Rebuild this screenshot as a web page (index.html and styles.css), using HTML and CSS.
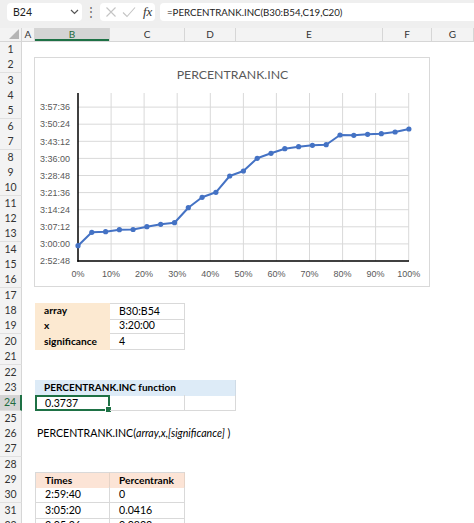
FILE: index.html
```html
<!DOCTYPE html>
<html>
<head>
<meta charset="utf-8">
<link rel="stylesheet" href="styles.css">
</head>
<body>
<div class="fbar">
  <div class="namebox"><span>B24</span>
    <svg class="chev" width="9" height="6" viewBox="0 0 9 6"><path d="M1 1 L4.5 4.5 L8 1" fill="none" stroke="#555" stroke-width="1.2"/></svg>
  </div>
  <div class="dots">⋮</div>
  <div class="fxbox">
    <svg width="12" height="12" viewBox="0 0 12 12"><path d="M1.5 1.5 L10.5 10.5 M10.5 1.5 L1.5 10.5" stroke="#c4c4c4" stroke-width="1.1" fill="none"/></svg>
    <svg width="14" height="12" viewBox="0 0 14 12"><path d="M1 6.5 L5 10.5 L13 1.5" stroke="#c4c4c4" stroke-width="1.1" fill="none"/></svg>
    <span class="fx">fx</span>
  </div>
  <div class="formula">=PERCENTRANK.INC(B30:B54,C19,C20)</div>
</div>

<div class="sheet">
  <div class="hrow">
    <div class="corner"><svg width="10" height="10" viewBox="0 0 10 10"><path d="M10 0 L10 10 L0 10 Z" fill="#b5b5b5"/></svg></div>
    <div class="ch">A</div><div class="ch sel">B</div><div class="ch">C</div><div class="ch">D</div><div class="ch">E</div><div class="ch">F</div><div class="ch">G</div>
  </div>
  <div class="row"><div class="rh">1</div></div>
  <div class="row"><div class="rh">2</div></div>
  <div class="row"><div class="rh">3</div></div>
  <div class="row"><div class="rh">4</div></div>
  <div class="row"><div class="rh">5</div></div>
  <div class="row"><div class="rh">6</div></div>
  <div class="row"><div class="rh">7</div></div>
  <div class="row"><div class="rh">8</div></div>
  <div class="row"><div class="rh">9</div></div>
  <div class="row"><div class="rh">10</div></div>
  <div class="row"><div class="rh">11</div></div>
  <div class="row"><div class="rh">12</div></div>
  <div class="row"><div class="rh">13</div></div>
  <div class="row"><div class="rh">14</div></div>
  <div class="row"><div class="rh">15</div></div>
  <div class="row"><div class="rh">16</div></div>
  <div class="row"><div class="rh">17</div></div>
  <div class="row"><div class="rh">18</div><div class="c cb lbl">array</div><div class="c cc bx bt">B30:B54</div></div>
  <div class="row"><div class="rh">19</div><div class="c cb lbl">x</div><div class="c cc bx">3:20:00</div></div>
  <div class="row"><div class="rh">20</div><div class="c cb lbl">significance</div><div class="c cc bx">4</div></div>
  <div class="row"><div class="rh">21</div></div>
  <div class="row"><div class="rh">22</div></div>
  <div class="row"><div class="rh">23</div><div class="c cbd blue">PERCENTRANK.INC function</div></div>
  <div class="row"><div class="rh rsel">24</div><div class="c cb selcell">0.3737<span class="handle"></span></div><div class="c cc bx"></div><div class="c cd bx"></div></div>
  <div class="row"><div class="rh">25</div></div>
  <div class="row"><div class="rh">26</div><div class="c cb syntax">PERCENTRANK.INC(<i>array,x,[significance]</i> )</div></div>
  <div class="row"><div class="rh">27</div></div>
  <div class="row"><div class="rh">28</div></div>
  <div class="row"><div class="rh">29</div><div class="c cb peach bl bt">Times</div><div class="c cc peach bt">Percentrank</div></div>
  <div class="row"><div class="rh">30</div><div class="c cb bx bl">2:59:40</div><div class="c cc bx">0</div></div>
  <div class="row"><div class="rh">31</div><div class="c cb bx bl">3:05:20</div><div class="c cc bx">0.0416</div></div>
  <div class="row"><div class="rh">32</div><div class="c cb bx bl">3:05:26</div><div class="c cc bx">0.0833</div></div>
</div>

<div class="chart">
  <svg width="396" height="230" viewBox="34 57 396 230">
    <text class="title" x="232.5" y="78.5" text-anchor="middle">PERCENTRANK.INC</text>
    <g stroke="#d9d9d9" stroke-width="1">
      <line x1="78" y1="107.1" x2="409" y2="107.1"/>
      <line x1="78" y1="124.2" x2="409" y2="124.2"/>
      <line x1="78" y1="141.3" x2="409" y2="141.3"/>
      <line x1="78" y1="158.4" x2="409" y2="158.4"/>
      <line x1="78" y1="175.5" x2="409" y2="175.5"/>
      <line x1="78" y1="192.6" x2="409" y2="192.6"/>
      <line x1="78" y1="209.7" x2="409" y2="209.7"/>
      <line x1="78" y1="226.8" x2="409" y2="226.8"/>
      <line x1="78" y1="243.9" x2="409" y2="243.9"/>
      <line x1="111.1" y1="93" x2="111.1" y2="261"/>
      <line x1="144.1" y1="93" x2="144.1" y2="261"/>
      <line x1="177.2" y1="93" x2="177.2" y2="261"/>
      <line x1="210.3" y1="93" x2="210.3" y2="261"/>
      <line x1="243.4" y1="93" x2="243.4" y2="261"/>
      <line x1="276.4" y1="93" x2="276.4" y2="261"/>
      <line x1="309.5" y1="93" x2="309.5" y2="261"/>
      <line x1="342.6" y1="93" x2="342.6" y2="261"/>
      <line x1="375.6" y1="93" x2="375.6" y2="261"/>
      <line x1="408.7" y1="93" x2="408.7" y2="261"/>
    </g>
    <g stroke="#000" stroke-width="1.5">
      <line x1="78" y1="93" x2="78" y2="261.7"/>
      <line x1="77.3" y1="261" x2="409" y2="261"/>
    </g>
    <g class="ylab" text-anchor="end">
      <text x="70" y="110.3">3:57:36</text>
      <text x="70" y="127.4">3:50:24</text>
      <text x="70" y="144.5">3:43:12</text>
      <text x="70" y="161.6">3:36:00</text>
      <text x="70" y="178.7">3:28:48</text>
      <text x="70" y="195.8">3:21:36</text>
      <text x="70" y="212.9">3:14:24</text>
      <text x="70" y="230">3:07:12</text>
      <text x="70" y="247.1">3:00:00</text>
      <text x="70" y="264.2">2:52:48</text>
    </g>
    <g class="xlab" text-anchor="middle">
      <text x="78" y="276.5">0%</text>
      <text x="111.1" y="276.5">10%</text>
      <text x="144.1" y="276.5">20%</text>
      <text x="177.2" y="276.5">30%</text>
      <text x="210.3" y="276.5">40%</text>
      <text x="243.4" y="276.5">50%</text>
      <text x="276.4" y="276.5">60%</text>
      <text x="309.5" y="276.5">70%</text>
      <text x="342.6" y="276.5">80%</text>
      <text x="375.6" y="276.5">90%</text>
      <text x="408.7" y="276.5">100%</text>
    </g>
    <polyline fill="none" stroke="#4472c4" stroke-width="2" stroke-linejoin="round" points="78,245.7 91.8,232.3 105.6,231.7 119.4,229.7 133.1,229.5 146.9,226.7 160.7,224.3 174.5,222.7 188.3,207.7 202.1,197.3 215.9,192.3 229.7,176 243.4,171 257.2,158.3 271,153.3 284.8,148.7 298.6,146.7 312.4,145.3 326.2,144.7 340,135 353.8,135.3 367.6,134.3 381.3,133.7 395.1,132 408.9,129"/>
    <g fill="#4472c4">
      <circle cx="78" cy="245.7" r="2.6"/><circle cx="91.8" cy="232.3" r="2.6"/><circle cx="105.6" cy="231.7" r="2.6"/><circle cx="119.4" cy="229.7" r="2.6"/><circle cx="133.1" cy="229.5" r="2.6"/><circle cx="146.9" cy="226.7" r="2.6"/><circle cx="160.7" cy="224.3" r="2.6"/><circle cx="174.5" cy="222.7" r="2.6"/><circle cx="188.3" cy="207.7" r="2.6"/><circle cx="202.1" cy="197.3" r="2.6"/><circle cx="215.9" cy="192.3" r="2.6"/><circle cx="229.7" cy="176" r="2.6"/><circle cx="243.4" cy="171" r="2.6"/><circle cx="257.2" cy="158.3" r="2.6"/><circle cx="271" cy="153.3" r="2.6"/><circle cx="284.8" cy="148.7" r="2.6"/><circle cx="298.6" cy="146.7" r="2.6"/><circle cx="312.4" cy="145.3" r="2.6"/><circle cx="326.2" cy="144.7" r="2.6"/><circle cx="340" cy="135" r="2.6"/><circle cx="353.8" cy="135.3" r="2.6"/><circle cx="367.6" cy="134.3" r="2.6"/><circle cx="381.3" cy="133.7" r="2.6"/><circle cx="395.1" cy="132" r="2.6"/><circle cx="408.9" cy="129" r="2.6"/>
    </g>
  </svg>
</div>
</body>
</html>
```

FILE: styles.css
```css
html, body {
  margin: 0;
  padding: 0;
}
body {
  width: 474px;
  height: 523px;
  overflow: hidden;
  position: relative;
  background: #fff;
  font-family: Lato, "Liberation Sans", sans-serif;
  color: #000;
}

/* formula bar */
.fbar {
  height: 28px;
  box-sizing: border-box;
  background: #efefef;
  display: flex;
  align-items: flex-start;
  padding-top: 3px;
  font-family: Lato, "Liberation Sans", sans-serif;
}
.namebox {
  margin-left: 7px;
  width: 75px;
  height: 18px;
  box-sizing: border-box;
  background: #fff;
  border-radius: 4px;
  display: flex;
  align-items: center;
  justify-content: space-between;
  padding: 0 3px 0 6px;
  font-size: 10.5px;
  color: #222;
}
.dots {
  width: 18px;
  height: 18px;
  text-align: center;
  line-height: 18px;
  font-size: 12px;
  color: #666;
}
.fxbox {
  width: 55px;
  height: 18px;
  box-sizing: border-box;
  background: #fff;
  border-radius: 4px;
  display: flex;
  align-items: center;
  gap: 5px;
  padding-left: 5px;
}
.fx {
  font-family: "Liberation Serif", serif;
  font-style: italic;
  font-size: 13px;
  color: #333;
  margin-left: 2px;
}
.formula {
  margin-left: 5px;
  flex: 1;
  height: 18px;
  background: #fff;
  border-radius: 4px 0 0 4px;
  font-size: 9.7px;
  line-height: 18px;
  padding-left: 7px;
  color: #222;
  white-space: nowrap;
}

/* sheet grid */
.hrow, .row {
  display: grid;
  grid-template-columns: 22px 13px 75px 75px 51px 147px 49px 1fr;
}
.hrow {
  height: 14px;
  background: #f3f3f3;
  border-bottom: 1px solid #d6d6d6;
  box-sizing: border-box;
}
.corner {
  border-right: 1px solid #d6d6d6;
  display: flex;
  align-items: flex-end;
  justify-content: flex-end;
  padding: 0 2px 2px 0;
}
.ch {
  border-right: 1px solid #d6d6d6;
  font-size: 10px;
  line-height: 13px;
  text-align: center;
  color: #333;
}
.ch.sel {
  background: #d4d4d4;
  color: #1e6b3f;
  box-shadow: inset 0 -2px 0 #1e7145;
}
.row {
  height: 15.37px;
}
.rh {
  grid-column: 1;
  background: #f3f3f3;
  border-right: 1px solid #d6d6d6;
  border-bottom: 1px solid #e0e0e0;
  box-sizing: border-box;
  font-size: 10.5px;
  line-height: 15px;
  text-align: center;
  color: #333;
}
.rh.rsel {
  background: #d4d4d4;
  color: #1e6b3f;
  border-right: 2px solid #1e7145;
}
.c {
  box-sizing: border-box;
  font-size: 10.6px;
  line-height: 15px;
  padding-left: 9px;
  white-space: nowrap;
  position: relative;
}
.cb { grid-column: 3; }
.cc { grid-column: 4; }
.cd { grid-column: 5; }
.cbd { grid-column: 3 / 6; }
.lbl {
  background: #fce9d1;
  font-weight: bold;
  font-size: 10.2px;
}
.peach {
  background: #fce4d6;
  font-weight: bold;
  font-size: 10.2px;
  border-right: 1px solid #e6d3c6;
}
.blue {
  background: #ddebf7;
  font-weight: bold;
  font-size: 10px;
  border-right: 1px solid #cfdbe6;
}
.bx {
  border-right: 1px solid #d9d9d9;
  border-bottom: 1px solid #d9d9d9;
}
.bt { border-top: 1px solid #d9d9d9; }
.bl { border-left: 1px solid #d9d9d9; }
.selcell {
  border: 2px solid #1e7145;
  padding-left: 8px;
  line-height: 12px;
}
.handle {
  position: absolute;
  right: -4px;
  bottom: -4px;
  width: 5px;
  height: 5px;
  background: #1e7145;
  border: 1px solid #fff;
}
.syntax {
  padding-left: 2px;
}

/* chart (floating object over the cells) */
.chart {
  position: absolute;
  left: 34px;
  top: 57px;
  width: 396px;
  height: 230px;
  box-sizing: border-box;
  background: #fff;
  border: 1px solid #d9d9d9;
}
.chart svg {
  position: absolute;
  left: -1px;
  top: -1px;
  display: block;
}
.title {
  font-family: Lato, "Liberation Sans", sans-serif;
  font-size: 12.3px;
  fill: #595959;
}
.ylab, .xlab {
  font-family: "Liberation Sans", sans-serif;
  font-size: 9px;
  fill: #595959;
}
```
